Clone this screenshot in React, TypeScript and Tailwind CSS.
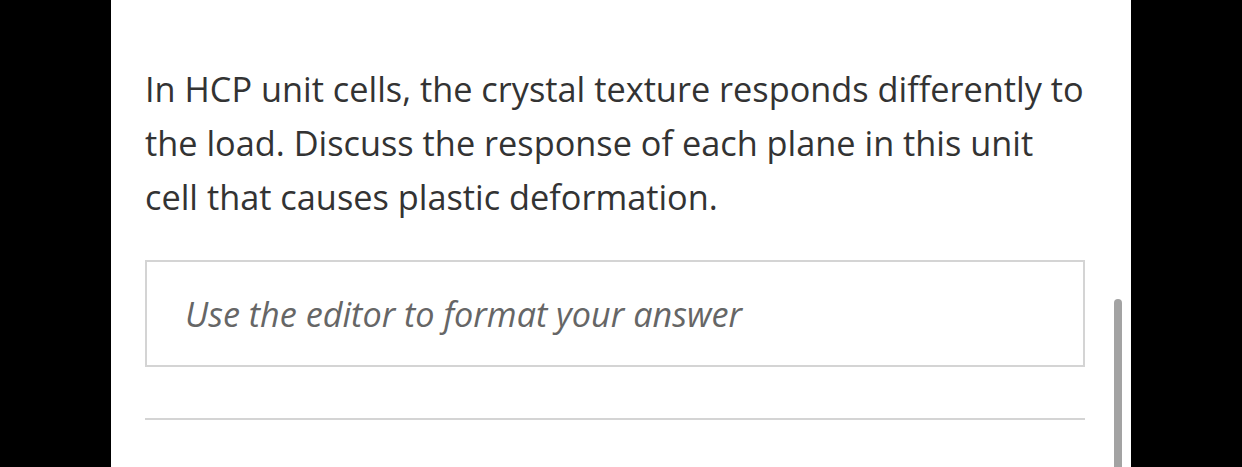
import React from "react";

function QuestionCard() {
  return (
    <div className="relative h-[467px] w-[1020px] bg-white overflow-hidden">
      <div className="pl-[34px] pt-[62px] w-[974px]">
        <p className="text-[#333333] text-[34.3px] leading-[54px] whitespace-nowrap font-['Open_Sans',sans-serif]">
          In HCP unit cells, the crystal texture responds differently to
          <br />
          the load. Discuss the response of each plane in this unit
          <br />
          cell that causes plastic deformation.
        </p>
        <div className="mt-[36px] h-[107px] border-2 border-[#d4d4d4] flex items-center pl-[38px]">
          <span className="italic text-[#666666] text-[34.2px] font-['Open_Sans',sans-serif]">
            Use the editor to format your answer
          </span>
        </div>
        <div className="mt-[51px] h-[2px] bg-[#d4d4d4]" />
      </div>
      {/* scrollbar */}
      <div className="absolute left-[1003px] top-[299px] w-[8px] h-[180px] rounded-t-full bg-[#a3a3a3]" />
    </div>
  );
}

export default function App() {
  return (
    <div className="w-[1242px] h-[467px] bg-black flex pl-[111px]">
      <QuestionCard />
    </div>
  );
}
